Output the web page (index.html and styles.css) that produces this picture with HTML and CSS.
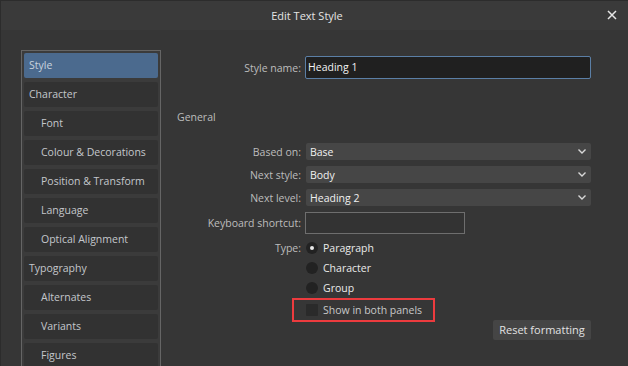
FILE: index.html
```html
<!DOCTYPE html>
<html>
<head>
<meta charset="utf-8">
<link rel="stylesheet" href="styles.css">
</head>
<body>
<div class="window">
  <div class="titlebar">
    <span class="title">Edit Text Style</span>
    <span class="close">
      <svg width="10" height="10" viewBox="0 0 10 10"><path d="M1 1 L9 9 M9 1 L1 9" stroke="#e6e6e6" stroke-width="1.5" fill="none"/></svg>
    </span>
  </div>
  <div class="main">
    <div class="sidebar">
      <div class="item selected">Style</div>
      <div class="item">Character</div>
      <div class="item sub">Font</div>
      <div class="item sub">Colour &amp; Decorations</div>
      <div class="item sub">Position &amp; Transform</div>
      <div class="item sub">Language</div>
      <div class="item sub">Optical Alignment</div>
      <div class="item">Typography</div>
      <div class="item sub">Alternates</div>
      <div class="item sub">Variants</div>
      <div class="item sub">Figures</div>
    </div>
    <div class="content">
      <div class="row row-name">
        <label class="lbl">Style name:</label>
        <div class="input">Heading 1</div>
      </div>
      <div class="section">General</div>
      <div class="row row-dd">
        <label class="lbl">Based on:</label>
        <div class="dropdown"><span>Base</span><svg class="chev" width="8" height="5" viewBox="0 0 8 5"><path d="M0.5 0.5 L4 4 L7.5 0.5" stroke="#d8d8d8" stroke-width="1.4" fill="none"/></svg></div>
      </div>
      <div class="row row-dd">
        <label class="lbl">Next style:</label>
        <div class="dropdown"><span>Body</span><svg class="chev" width="8" height="5" viewBox="0 0 8 5"><path d="M0.5 0.5 L4 4 L7.5 0.5" stroke="#d8d8d8" stroke-width="1.4" fill="none"/></svg></div>
      </div>
      <div class="row row-dd">
        <label class="lbl">Next level:</label>
        <div class="dropdown"><span>Heading 2</span><svg class="chev" width="8" height="5" viewBox="0 0 8 5"><path d="M0.5 0.5 L4 4 L7.5 0.5" stroke="#d8d8d8" stroke-width="1.4" fill="none"/></svg></div>
      </div>
      <div class="row row-key">
        <label class="lbl">Keyboard shortcut:</label>
        <div class="shortcut"></div>
      </div>
      <div class="row row-radio">
        <label class="lbl">Type:</label>
        <div class="radio"><span class="dot on"></span><span class="rtext">Paragraph</span></div>
      </div>
      <div class="row row-radio">
        <span class="lbl"></span>
        <div class="radio"><span class="dot"></span><span class="rtext">Character</span></div>
      </div>
      <div class="row row-radio">
        <span class="lbl"></span>
        <div class="radio"><span class="dot"></span><span class="rtext">Group</span></div>
      </div>
      <div class="row row-check">
        <span class="lbl"></span>
        <div class="highlight"><span class="box"></span><span class="ctext">Show in both panels</span></div>
      </div>
      <div class="buttons">
        <div class="button">Reset formatting</div>
      </div>
    </div>
  </div>
</div>
</body>
</html>
```

FILE: styles.css
```css
html, body {
  margin: 0;
  padding: 0;
  background: #363636;
}
body {
  font-family: "Open Sans", "Noto Sans", sans-serif;
  font-size: 10.5px;
  color: #c2c2c2;
}
.window {
  width: 628px;
  height: 366px;
  overflow: hidden;
  background: #363636;
  box-sizing: border-box;
  border-left: 1px solid #2c2c2c;
  border-top: 1px solid #2c2c2c;
}
.titlebar {
  height: 29px;
  background: #3a3a3a;
  display: flex;
  align-items: center;
  justify-content: center;
  position: relative;
}
.title {
  font-size: 11px;
  color: #e4e4e4;
  margin-left: -15px;
}
.close {
  position: absolute;
  right: 11px;
  top: 9px;
  width: 10px;
  height: 10px;
  display: flex;
}
.main {
  display: flex;
  padding-left: 20px;
}
.sidebar {
  flex: none;
  margin-top: 20px;
  width: 134px;
  height: 340px;
  border: 1px solid #656565;
  border-bottom: none;
  background: #3b3b3b;
  padding: 2px 2px 0 2px;
  display: flex;
  flex-direction: column;
  gap: 4px;
}
.item {
  flex: none;
  height: 25px;
  line-height: 25px;
  background: #323232;
  border-radius: 2px;
  padding-left: 5px;
  color: #c4c7cb;
  white-space: nowrap;
}
.item.sub {
  padding-left: 17px;
}
.item.selected {
  background: #4b6a8e;
  color: #c9d3de;
}
.content {
  padding-left: 16px;
  padding-top: 26px;
  width: 414px;
  display: flex;
  flex-direction: column;
}
.row {
  display: flex;
  align-items: center;
}
.lbl {
  width: 124px;
  flex: none;
  text-align: right;
  margin-right: 4px;
  color: #bdbdbd;
  white-space: nowrap;
}
.row-name {
  height: 23px;
}
.input {
  box-sizing: border-box;
  height: 23px;
  width: 286px;
  background: #202020;
  border: 1px solid #5b7fa6;
  border-radius: 2px;
  padding-left: 2px;
  line-height: 21px;
  color: #f2f2f2;
}
.section {
  margin-top: 30px;
  height: 16px;
  line-height: 16px;
  color: #bdbdbd;
}
.row-dd {
  height: 17px;
  margin-top: 6px;
}
.section + .row-dd {
  margin-top: 18px;
}
.dropdown {
  box-sizing: border-box;
  height: 17px;
  width: 285px;
  margin-left: 1px;
  background: #464646;
  border-radius: 2px;
  display: flex;
  align-items: center;
  justify-content: space-between;
  padding: 0 5px 0 4px;
  color: #f0f0f0;
}
.chev {
  display: block;
}
.row-key {
  height: 22px;
  margin-top: 6px;
}
.shortcut {
  box-sizing: border-box;
  width: 160px;
  height: 22px;
  border: 1px solid #6e6e6e;
  background: #333333;
}
.row-radio {
  height: 20px;
}
.row-key + .row-radio {
  margin-top: 4px;
}
.radio {
  display: flex;
  align-items: center;
}
.dot {
  width: 12px;
  height: 12px;
  border-radius: 50%;
  background: #222222;
  margin-left: 1px;
  display: flex;
  align-items: center;
  justify-content: center;
}
.dot.on::after {
  content: "";
  width: 4px;
  height: 4px;
  border-radius: 50%;
  background: #e8e8e8;
}
.rtext {
  margin-left: 5px;
  color: #eaeaea;
}
.row-check {
  height: 23px;
}
.highlight {
  box-sizing: border-box;
  height: 24px;
  width: 143px;
  margin-left: -13px;
  border: 2px solid #ec3b3e;
  display: flex;
  align-items: center;
  padding-left: 12px;
}
.box {
  width: 12px;
  height: 12px;
  background: #2a2a2a;
  border-radius: 1px;
}
.ctext {
  margin-left: 5px;
  color: #c8c8c8;
}
.buttons {
  display: flex;
  justify-content: flex-end;
  width: 414px;
  margin-top: -1px;
}
.button {
  height: 20px;
  line-height: 20px;
  padding: 0 5px;
  width: 88px;
  text-align: center;
  background: #454545;
  border-radius: 2px;
  font-size: 11px;
  color: #e2e2e2;
}
```
